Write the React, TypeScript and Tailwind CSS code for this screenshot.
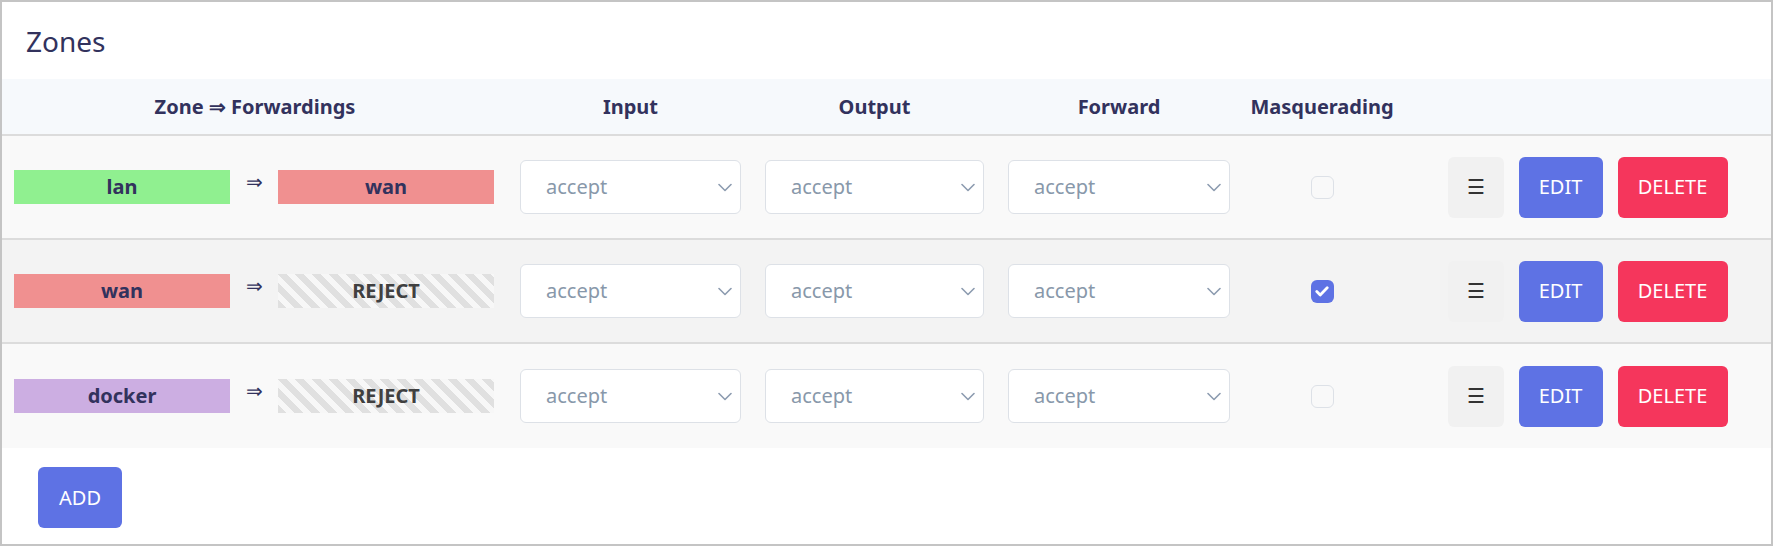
import * as React from 'react';

type Zone = {
  name: string;
  color: string;
  forward: string | null;
  forwardColor?: string;
  masq: boolean;
  bg: string;
};

const zones: Zone[] = [
  { name: 'lan', color: 'bg-[#90f090]', forward: 'wan', forwardColor: 'bg-[#f09090]', masq: false, bg: 'bg-[#f9f9f9]' },
  { name: 'wan', color: 'bg-[#f09090]', forward: null, masq: true, bg: 'bg-[#f3f3f3]' },
  { name: 'docker', color: 'bg-[#ccaee2]', forward: null, masq: false, bg: 'bg-[#f9f9f9]' },
];

const cols = 'grid grid-cols-[506px_245px_243px_246px_160px_1fr]';

const Chevron = () => (
  <svg width="14" height="9" viewBox="0 0 14 9" fill="none" className="shrink-0">
    <path d="M1 1.5l6 6 6-6" stroke="#8d9cb0" strokeWidth="1.6" strokeLinecap="round" strokeLinejoin="round" />
  </svg>
);

const Select = ({ value }: { value: string }) => (
  <div className="flex h-[54px] w-full items-center justify-between rounded-[6px] border border-[#dde1e7] bg-white pl-[25px] pr-[8px] text-[20px] text-[#8898aa]">
    <span>{value}</span>
    <Chevron />
  </div>
);

const Checkbox = ({ checked }: { checked: boolean }) =>
  checked ? (
    <div className="flex h-[23px] w-[23px] items-center justify-center rounded-[6px] bg-[#5e72e4]">
      <svg width="14" height="11" viewBox="0 0 14 11" fill="none">
        <path d="M1.8 5.6l3.4 3.3L12.2 1.8" stroke="white" strokeWidth="2.8" strokeLinecap="round" strokeLinejoin="round" />
      </svg>
    </div>
  ) : (
    <div className="h-[23px] w-[23px] rounded-[6px] border border-[#dde1e7]" />
  );

const Badge = ({ label, color }: { label: string; color: string }) => (
  <div className={`flex h-[34px] w-[216px] items-center justify-center text-[20px] font-bold text-[#32325d] ${color}`}>
    {label}
  </div>
);

const Reject = () => (
  <div className="flex h-[34px] w-[216px] items-center justify-center bg-[repeating-linear-gradient(45deg,#e0e0e0_0px,#e0e0e0_6px,#f7f7f7_6px,#f7f7f7_12px)] text-[20px] font-bold text-[#404040]">
    REJECT
  </div>
);

export default function App() {
  return (
    <div className="flex h-[546px] w-[1773px] flex-col border-2 border-[#c4c4c4] bg-white font-['Noto_Sans',sans-serif] text-[#32325d]">
      <div className="flex h-[77px] items-center pl-[24px] text-[28px] leading-none">Zones</div>

      <div className={`${cols} h-[57px] items-center border-b-2 border-[#dcdcdc] bg-[#f6f9fc] text-[20px] font-bold`}>
        <div className="text-center">Zone ⇒ Forwardings</div>
        <div className="text-center">Input</div>
        <div className="text-center">Output</div>
        <div className="text-center">Forward</div>
        <div className="text-center">Masquerading</div>
        <div />
      </div>

      {zones.map((z, i) => (
        <div
          key={z.name}
          className={`${cols} h-[104px] items-center ${z.bg} ${i < zones.length - 1 ? 'border-b-2 border-[#dcdcdc]' : ''}`}
        >
          <div className="flex items-center px-[12px]">
            <Badge label={z.name} color={z.color} />
            <div className="flex w-[48px] justify-center pb-[10px] text-[20px]">⇒</div>
            {z.forward ? <Badge label={z.forward} color={z.forwardColor ?? ''} /> : <Reject />}
          </div>
          <div className="px-[12px]">
            <Select value="accept" />
          </div>
          <div className="px-[12px]">
            <Select value="accept" />
          </div>
          <div className="px-[12px]">
            <Select value="accept" />
          </div>
          <div className="flex justify-center">
            <Checkbox checked={z.masq} />
          </div>
          <div className="flex justify-center gap-[15px] pl-[2px]">
            <button className="h-[61px] w-[56px] rounded-[6px] bg-[#f1f1f1] text-[20px] text-[#333]">☰</button>
            <button className="h-[61px] w-[84px] rounded-[6px] bg-[#5e72e4] text-[20px] text-white">EDIT</button>
            <button className="h-[61px] w-[110px] rounded-[6px] bg-[#f5365c] text-[20px] text-white">DELETE</button>
          </div>
        </div>
      ))}

      <div className="pl-[36px] pt-[19px]">
        <button className="h-[61px] w-[84px] rounded-[6px] bg-[#5e72e4] text-[20px] text-white">ADD</button>
      </div>
    </div>
  );
}
